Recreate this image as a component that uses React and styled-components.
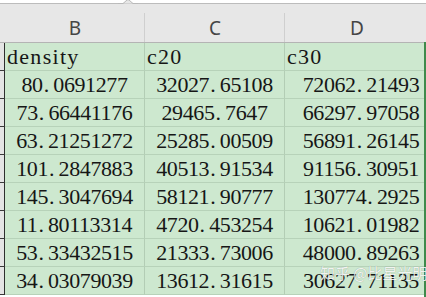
import React from 'react'
import styled, { createGlobalStyle } from 'styled-components'

const rows = [
	['80.0691277', '32027.65108', '72062.21493'],
	['73.66441176', '29465.7647', '66297.97058'],
	['63.21251272', '25285.00509', '56891.26145'],
	['101.2847883', '40513.91534', '91156.30951'],
	['145.3047694', '58121.90777', '130774.2925'],
	['11.80113314', '4720.453254', '10621.01982'],
	['53.33432515', '21333.73006', '48000.89263'],
	['34.03079039', '13612.31615', '30627.71135'],
]

const Num = ({ value }) => {
	const [a, b] = value.split('.')
	return (
		<span>
			{a}
			<Dot>.</Dot>
			{b}
		</span>
	)
}

const App = () => {
	return (
		<>
			<GlobalStyle />
			<Sheet>
				<Notch width="20" height="6" viewBox="0 0 20 6">
					<path d="M0 4.5 L5 4.5 L9 1 Q10 0.2 11 1 L15 4.5 L20 4.5" fill="#e7e7e7" stroke="#b9b9b9" strokeWidth="1" />
				</Notch>
				<Grid>
					<Corner />
					<ColHead>B</ColHead>
					<ColHead>C</ColHead>
					<ColHead $last>D</ColHead>

					<RowHead />
					<Cell $text>density</Cell>
					<Cell $text>c20</Cell>
					<Cell $text $last>c30</Cell>

					{rows.map((r, i) => (
						<React.Fragment key={i}>
							<RowHead />
							<Cell><Num value={r[0]} /></Cell>
							<Cell><Num value={r[1]} /></Cell>
							<Cell $last $shift><Num value={r[2]} /></Cell>
						</React.Fragment>
					))}
				</Grid>
				<SelEdge />
				<Watermark>知乎 @比星光明</Watermark>
			</Sheet>
		</>
	)
}

const GlobalStyle = createGlobalStyle`
html, body {
	margin: 0;
	padding: 0;
	background: #ffffff;
	overflow: hidden;
}
`

const Sheet = styled.div`
position: relative;
width: 426px;
height: 297px;
overflow: hidden;
padding-top: 3px;
box-sizing: border-box;
`

const Notch = styled.svg`
position: absolute;
left: 118px;
top: -1px;
`

const Grid = styled.div`
display: grid;
grid-template-columns: 5px 140px 140px 144px;
grid-template-rows: 39px repeat(9, 28px);
border-top: 1px solid #bcbcbc;
`

const Corner = styled.div`
background: #e7e7e7;
border-bottom: 1px solid #b4b4b4;
`

const ColHead = styled.div`
background: #e7e7e7;
border-bottom: 1px solid #b4b4b4;
display: flex;
padding-top: 9px;
box-sizing: border-box;
span, & {
	font-family: "Noto Sans", "Open Sans", sans-serif;
}
font-size: 19px;
color: #454545;
justify-content: center;
align-items: center;
background-image: ${p => p.$last ? 'none' : 'linear-gradient(#cfcfcf, #cfcfcf)'};
background-size: 1px calc(100% - 9px);
background-position: right bottom;
background-repeat: no-repeat;
`

const RowHead = styled.div`
background: #e4e4e4;
border-right: 1px solid #2e2e2e;
border-bottom: 1px solid #3a3a3a;
`

const Cell = styled.div`
background: #cde8cf;
border-bottom: 1px solid #b7d2b9;
border-right: ${p => p.$last ? 'none' : '1px solid #b3cdb5'};
display: flex;
align-items: center;
justify-content: ${p => p.$text ? 'flex-start' : 'center'};
padding-left: ${p => p.$text ? '2px' : p.$shift ? '8px' : '0'};
font-family: "Liberation Serif", "DejaVu Serif", serif;
font-size: 22px;
letter-spacing: ${p => p.$text ? '1.3px' : '-0.4px'};
color: #161616;
white-space: nowrap;
overflow: hidden;
`

const Dot = styled.span`
display: inline-block;
width: 10.6px;
text-align: left;
padding-left: 1px;
box-sizing: border-box;
`

const SelEdge = styled.div`
position: absolute;
left: 424px;
top: 42px;
width: 2px;
height: 255px;
background: #3f8a4c;
`

const Watermark = styled.div`
position: absolute;
left: 320px;
top: 262px;
font-family: "Noto Sans CJK SC", "Noto Sans", sans-serif;
font-size: 15px;
color: rgba(255, 255, 255, 0.88);
text-shadow: 0 0 1px rgba(0, 0, 0, 0.35);
white-space: nowrap;
`

export default App
